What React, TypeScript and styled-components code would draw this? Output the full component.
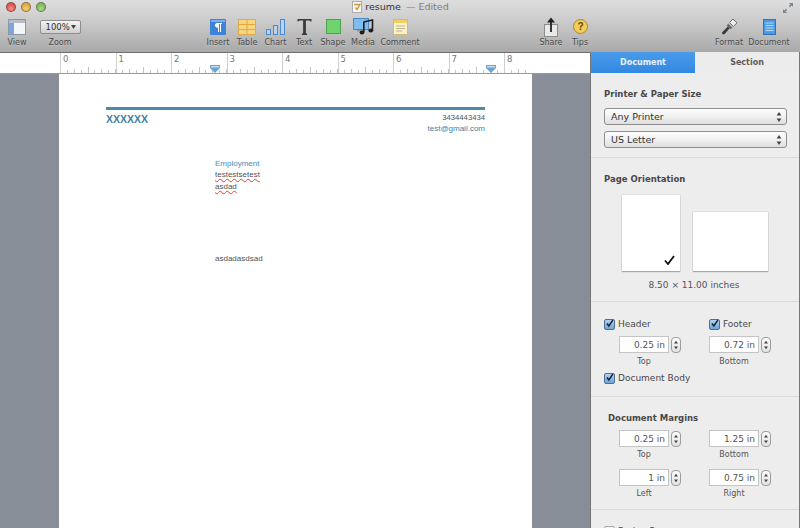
import React from "react";
import styled, { createGlobalStyle } from "styled-components";

const GlobalStyle = createGlobalStyle`
  html, body {
    margin: 0;
    padding: 0;
    height: 100%;
    overflow: hidden;
    background: #ededed;
  }
  * { box-sizing: border-box; }
`;

const Window = styled.div`
  width: 800px;
  height: 528px;
  overflow: hidden;
  display: flex;
  flex-direction: column;
  font-family: "DejaVu Sans", "Open Sans", sans-serif;
  color: #444;
`;

const Chrome = styled.header`
  height: 53px;
  flex: none;
  background: linear-gradient(#dedede, #c9c9c9 45%, #a9a9a9);
  border-bottom: 1px solid #6e6e6e;
`;

const TitleRow = styled.div`
  height: 13px;
  display: grid;
  grid-template-columns: 1fr auto 1fr;
  align-items: center;
`;

const Lights = styled.div`
  display: flex;
  gap: 5px;
  padding-left: 6px;
`;

const Light = styled.span<{ $color: string }>`
  width: 10px;
  height: 10px;
  border-radius: 50%;
  border: 1px solid rgba(70, 70, 70, 0.55);
  background: radial-gradient(circle at 50% 70%, #fff6 0, transparent 60%), ${(p) => p.$color};
`;

const Title = styled.div`
  display: flex;
  align-items: center;
  gap: 3px;
  padding-left: 1px;
  font-size: 9.5px;
  color: #333;
`;

const Edited = styled.span`
  color: #7f7f7f;
  margin-left: 2px;
`;

const Expand = styled.div`
  justify-self: end;
  padding: 3px 7px 0 0;
  display: flex;
`;

const Toolbar = styled.div`
  display: flex;
  padding-top: 3px;
`;

const ToolGroup = styled.div<{ $gap?: number }>`
  display: flex;
  margin-left: ${(p) => p.$gap ?? 0}px;
`;

const Tool = styled.div<{ $w: number }>`
  width: ${(p) => p.$w}px;
  display: flex;
  flex-direction: column;
  align-items: center;
`;

const ToolIconSlot = styled.div`
  height: 21px;
  display: flex;
  align-items: center;
  justify-content: center;
`;

const ToolLabel = styled.div`
  font-size: 8px;
  line-height: 11px;
  color: #4a4a4a;
  white-space: nowrap;
  text-shadow: 0 1px 0 rgba(255, 255, 255, 0.25);
`;

const ZoomSelect = styled.div`
  width: 41px;
  height: 14px;
  display: flex;
  align-items: center;
  justify-content: space-between;
  padding: 0 4px 0 5px;
  font-size: 8.5px;
  color: #333;
  background: linear-gradient(#f4f4f4, #cfcfcf);
  border: 1px solid #8e8e8e;
  border-radius: 2px;
`;

const Workspace = styled.div`
  flex: 1;
  min-height: 0;
  display: flex;
`;

const Editor = styled.main`
  width: 590px;
  flex: none;
  display: flex;
  flex-direction: column;
`;

const Ruler = styled.div`
  position: relative;
  height: 21px;
  flex: none;
  display: flex;
  padding-left: 60px;
  background: #fff;
  border-bottom: 1px solid #9a9a9a;
`;

const Inch = styled.div<{ $w?: number }>`
  width: ${(p) => p.$w ?? 55.5}px;
  flex: none;
  border-left: 1px solid #cfcfcf;
  padding: 1px 0 0 2px;
  display: flex;
  flex-direction: column;
  justify-content: space-between;
  overflow: hidden;
`;

const InchNumber = styled.span`
  font-size: 8.5px;
  line-height: 11px;
  color: #777;
`;

const Ticks = styled.div`
  display: flex;
  align-items: flex-end;
  margin-left: -2px;
`;

const Tick = styled.i<{ $h: number }>`
  display: block;
  width: 6.9px;
  flex: none;
  height: ${(p) => p.$h}px;
  border-right: 1px solid #c6c6c6;
`;

const Marker = styled.svg<{ $x: number }>`
  position: absolute;
  left: ${(p) => p.$x}px;
  bottom: 0;
`;

const Canvas = styled.div`
  flex: 1;
  min-height: 0;
  padding-left: 59px;
  background: #878e98;
`;

const Page = styled.article`
  width: 473px;
  height: 100%;
  background: #fff;
  padding: 33px 47px 0;
`;

const PageRule = styled.div`
  height: 2.5px;
  background: #4d88a8;
`;

const LetterHead = styled.div`
  display: flex;
  justify-content: space-between;
  padding-top: 2px;
`;

const Name = styled.div`
  font-family: "Liberation Sans", Arial, sans-serif;
  font-size: 10.5px;
  line-height: 14px;
  font-weight: 700;
  color: #3f82a6;
`;

const Contact = styled.div`
  font-family: "Liberation Sans", Arial, sans-serif;
  font-size: 7.7px;
  line-height: 11px;
  text-align: right;
  color: #555;
`;

const Mail = styled.div`
  color: #3f82a6;
  font-size: 8px;
`;

const BodyColumn = styled.div`
  margin: 24px 0 0 109px;
  font-family: "Liberation Sans", Arial, sans-serif;
  font-size: 8px;
  line-height: 11.5px;
  color: #555;
`;

const SectionHead = styled.div`
  color: #4a8ab5;
`;

const Misspelt = styled.div`
  height: 12px;
  line-height: 12px;
  text-decoration: underline wavy #e0403c;
  text-decoration-thickness: 1px;
  text-underline-offset: 1px;
`;

const LastLine = styled.div`
  margin-top: 60px;
`;

const Sidebar = styled.aside`
  width: 210px;
  flex: none;
  background: #ededed;
  border-left: 1px solid #777;
  border-right: 1px solid #777;
  margin-top: -1px;
  overflow: hidden;
`;

const Tabs = styled.div`
  height: 21px;
  display: flex;
`;

const Tab = styled.div<{ $active?: boolean }>`
  flex: 1;
  display: flex;
  align-items: center;
  justify-content: center;
  font-size: 8px;
  font-weight: 700;
  color: ${(p) => (p.$active ? "#e8f2fc" : "#5c5c5c")};
  background: ${(p) => (p.$active ? "linear-gradient(#4a9bea, #3288e0)" : "#ececec")};
`;

const Section = styled.section<{ $top?: number; $bottom?: number }>`
  padding: ${(p) => p.$top ?? 15}px 12px ${(p) => p.$bottom ?? 0}px 13px;
  border-bottom: 1px solid #dadada;
`;

const Heading = styled.h3<{ $indent?: number }>`
  margin: 0;
  font-size: 8.5px;
  line-height: 12px;
  font-weight: 700;
  color: #484848;
  padding-left: ${(p) => p.$indent ?? 0}px;
`;

const Select = styled.div<{ $first?: boolean }>`
  height: 17px;
  margin-top: ${(p) => (p.$first ? 8 : 6)}px;
  display: flex;
  align-items: center;
  justify-content: space-between;
  padding: 0 4px 0 6px;
  font-size: 9.5px;
  color: #333;
  background: linear-gradient(#fdfdfd, #f1f1f1 50%, #dedede);
  border: 1px solid #8f8f8f;
  border-radius: 3px;
`;

const Orientation = styled.div`
  display: flex;
  align-items: flex-end;
  gap: 13px;
  margin-top: 10px;
  padding-left: 18px;
`;

const Sheet = styled.div<{ $w: number; $h: number }>`
  width: ${(p) => p.$w}px;
  height: ${(p) => p.$h}px;
  background: #fff;
  box-shadow: 0 0 1px rgba(0, 0, 0, 0.3), 0 1px 1px rgba(0, 0, 0, 0.25);
  display: flex;
  align-items: flex-end;
  justify-content: flex-end;
  padding: 0 5px 6px 0;
`;

const Dimensions = styled.div`
  margin-top: 8px;
  text-align: center;
  font-size: 9px;
  line-height: 12px;
  color: #555;
  padding-right: 3px;
`;

const HeaderGrid = styled.div`
  display: grid;
  grid-template-columns: 105px 1fr;
`;

const CheckRow = styled.label`
  display: flex;
  align-items: center;
  gap: 3px;
  height: 12px;
  font-size: 9px;
  white-space: nowrap;
  color: #484848;
`;

const BodyCheck = styled(CheckRow)`
  margin-top: 5px;
`;

const CheckBox = styled.span<{ $on?: boolean }>`
  width: 11px;
  height: 11px;
  flex: none;
  display: flex;
  align-items: center;
  justify-content: center;
  border-radius: 2px;
  border: 1px solid ${(p) => (p.$on ? "#4c6f95" : "#aaa")};
  background: ${(p) => (p.$on ? "linear-gradient(#b5d2ee, #6fa3d8)" : "#f5f5f5")};
`;

const Field = styled.div<{ $indent?: number }>`
  margin-left: ${(p) => p.$indent ?? 0}px;
  display: flex;
  flex-direction: column;
  width: 62px;
`;

const FieldRow = styled.div`
  display: flex;
  align-items: center;
  gap: 2px;
`;

const Input = styled.div`
  width: 50px;
  height: 17px;
  display: flex;
  align-items: center;
  justify-content: flex-end;
  padding-right: 3px;
  font-size: 9px;
  color: #555;
  background: #fff;
  border: 1px solid #c4c4c4;
`;

const Stepper = styled.div`
  width: 10px;
  height: 16px;
  display: flex;
  align-items: center;
  justify-content: center;
  border: 1px solid #9c9c9c;
  border-radius: 4px;
  background: linear-gradient(#fbfbfb, #e2e2e2);
`;

const Caption = styled.div<{ $gap: number }>`
  width: 50px;
  text-align: center;
  font-size: 8px;
  line-height: 11px;
  color: #555;
  margin-top: ${(p) => p.$gap}px;
`;

const NumberFieldSlot = styled.div`
  margin-top: 6px;
`;

const MarginGrid = styled.div`
  display: grid;
  grid-template-columns: 90px 1fr;
  row-gap: 9px;
  padding: 6px 0 10px 15px;
`;

function SelectArrows() {
  return (
    <svg width="6" height="12" viewBox="0 0 6 12">
      <path d="M3 1 5.4 4.6H.6zM3 11 .6 7.4h4.8z" fill="#444" />
    </svg>
  );
}

function NumberField({ value, label, indent, gap = 2 }: { value: string; label: string; indent?: number; gap?: number }) {
  return (
    <Field $indent={indent}>
      <FieldRow>
        <Input>{value}</Input>
        <Stepper>
          <svg width="6" height="10" viewBox="0 0 6 10">
            <path d="M3 .8 5 3.4H1zM3 9.2 1 6.6h4z" fill="#444" />
          </svg>
        </Stepper>
      </FieldRow>
      <Caption $gap={gap}>{label}</Caption>
    </Field>
  );
}

function Check({ on = true }: { on?: boolean }) {
  return (
    <CheckBox $on={on}>
      {on && (
        <svg width="11" height="11" viewBox="0 0 11 11" style={{ marginTop: -2 }}>
          <path d="M2.4 5.6 4.7 8.6 9.6 1.4" fill="none" stroke="#14243c" strokeWidth="1.9" />
        </svg>
      )}
    </CheckBox>
  );
}

const ViewIcon = () => (
  <svg width="18" height="16" viewBox="0 0 18 16">
    <rect x=".5" y=".5" width="17" height="15" fill="#f4f5f7" stroke="#8a97a8" />
    <rect x="1" y="1" width="16" height="3" fill="#b9bec6" />
    <rect x="1" y="4" width="5" height="11" fill="#7ea6dc" />
  </svg>
);

const InsertIcon = () => (
  <svg width="16" height="16" viewBox="0 0 16 16">
    <rect width="16" height="16" rx="1" fill="#3f83d8" />
    <rect x="1" y="1" width="14" height="2" fill="#7db1ee" />
    <path d="M7 4h5v1h-1v8H10V5H9v8H8V8.6C6 8.6 5 7.4 5 6.2S6 4 7 4z" fill="#fff" />
  </svg>
);

const TableIcon = () => (
  <svg width="18" height="16" viewBox="0 0 18 16">
    <rect x=".5" y=".5" width="17" height="15" fill="#f6d67e" stroke="#d9ae52" />
    <path d="M9 0v16M0 5.5h18M0 10.5h18" stroke="#e0a83e" strokeWidth="1" />
  </svg>
);

const ChartIcon = () => (
  <svg width="19" height="16" viewBox="0 0 19 16">
    <g fill="#b9d2ee" stroke="#4c8bd0">
      <rect x=".5" y="10.5" width="4" height="5" />
      <rect x="7.5" y="6.5" width="4" height="9" />
      <rect x="14.5" y=".5" width="4" height="15" />
    </g>
  </svg>
);

const TextIcon = () => (
  <svg width="15" height="17" viewBox="0 0 15 17">
    <path d="M.5 1h14v2.6h-1C13.2 2.8 12.8 2.4 11.6 2.4H8.9V15l1.2 1v1H4.9v-1l1.2-1V2.4H3.4C2.2 2.4 1.8 2.8 1.5 3.6h-1z" fill="#3b3b3b" />
  </svg>
);

const ShapeIcon = () => (
  <svg width="15" height="15" viewBox="0 0 15 15">
    <rect x=".5" y=".5" width="14" height="14" fill="#6fd36e" stroke="#4aa34a" />
  </svg>
);

const MediaIcon = () => (
  <svg width="21" height="17" viewBox="0 0 21 17">
    <rect x=".5" y=".5" width="15" height="11" fill="#7dbdf0" stroke="#4b87c4" />
    <rect x="4" y="12" width="7" height="1.5" fill="#8a94a0" />
    <path d="M10.5 4 19.5 2v10.5" fill="none" stroke="#1e1e1e" strokeWidth="1.6" />
    <path d="M10.8 4v10" stroke="#1e1e1e" strokeWidth="1.6" />
    <ellipse cx="9" cy="14.5" rx="2.4" ry="1.9" fill="#1e1e1e" />
    <ellipse cx="17.8" cy="12.5" rx="2.4" ry="1.9" fill="#1e1e1e" />
  </svg>
);

const CommentIcon = () => (
  <svg width="15" height="16" viewBox="0 0 15 16">
    <rect x=".5" y=".5" width="14" height="15" fill="#fbf3c6" stroke="#cfbb73" />
    <rect x="1" y="1" width="13" height="3" fill="#f2cf63" />
    <path d="M3 7h9M3 9.5h9M3 12h6" stroke="#b8b294" />
  </svg>
);

const ShareIcon = () => (
  <svg width="14" height="20" viewBox="0 0 14 20">
    <rect x=".5" y="7.5" width="13" height="12" fill="#e9e9e9" stroke="#8c8c8c" />
    <path d="M7 15V2" stroke="#222" strokeWidth="1.8" />
    <path d="M3 5.5 7 .5l4 5z" fill="#222" />
  </svg>
);

const TipsIcon = () => (
  <svg width="15" height="15" viewBox="0 0 15 15">
    <circle cx="7.5" cy="7.5" r="7" fill="#f3cb55" stroke="#a58a3e" />
    <text x="7.5" y="11" textAnchor="middle" fontSize="10" fontWeight="700" fontFamily="Liberation Sans, sans-serif" fill="#5f4c1c">?</text>
  </svg>
);

const FormatIcon = () => (
  <svg width="17" height="17" viewBox="0 0 17 17">
    <path d="M8.5 4.5 12 1l4 3.8-3.6 3.7z" fill="#ececec" stroke="#6f6f6f" />
    <path d="M7.2 5.6 11.4 9.8 9.4 11.2 5.8 7.6z" fill="#6a6a6a" />
    <path d="M6.8 8.4 8.6 10.2 3.8 16c-1.2.8-3 .2-2.8-1.6z" fill="#3c3c3c" />
  </svg>
);

const DocumentIcon = () => (
  <svg width="13" height="16" viewBox="0 0 13 16">
    <rect x=".5" y=".5" width="12" height="15" fill="#4d9ae6" stroke="#2f72bd" />
    <path d="M2.5 4h8M2.5 6.5h8M2.5 9h8M2.5 11.5h8" stroke="#bcdcf8" />
  </svg>
);

const ToolItem = ({ w, label, children }: { w: number; label: string; children: React.ReactNode }) => (
  <Tool $w={w}>
    <ToolIconSlot>{children}</ToolIconSlot>
    <ToolLabel>{label}</ToolLabel>
  </Tool>
);

const inches = ["0", "1", "2", "3", "4", "5", "6", "7", "8"];

const MarkerIcon = ({ x }: { x: number }) => (
  <Marker $x={x} width="10" height="8" viewBox="0 0 10 8">
    <path d="M0 0h10v3L5 8 0 3z" fill="#6fa3cf" />
    <path d="M1 1h8v1.5H1z" fill="#c4dcf0" />
  </Marker>
);

export default function App() {
  return (
    <Window>
      <GlobalStyle />
      <Chrome>
        <TitleRow>
          <Lights>
            <Light $color="#e2544f" />
            <Light $color="#e5ab3a" />
            <Light $color="#7fbb58" />
          </Lights>
          <Title>
            <svg width="10" height="12" viewBox="0 0 10 12">
              <rect x=".5" y=".5" width="9" height="11" fill="#f7f7f7" stroke="#aaa" />
              <path d="M2 3.5h6L5 8.5 3.5 6.5" fill="none" stroke="#c9963c" strokeWidth="1.3" />
            </svg>
            <span>resume</span>
            <Edited>— Edited</Edited>
          </Title>
          <Expand>
            <svg width="10" height="10" viewBox="0 0 10 10">
              <path d="M6 0h4v4L8.6 2.6 7 4.2 5.8 3 7.4 1.4zM0 10V6l1.4 1.4L3 5.8 4.2 7 2.6 8.6 4 10z" fill="#7d8791" />
            </svg>
          </Expand>
        </TitleRow>
        <Toolbar>
          <ToolGroup>
            <ToolItem w={34} label="View"><ViewIcon /></ToolItem>
            <ToolItem w={52} label="Zoom">
              <ZoomSelect>
                100%
                <svg width="5" height="4" viewBox="0 0 5 4"><path d="M0 0h5L2.5 4z" fill="#444" /></svg>
              </ZoomSelect>
            </ToolItem>
          </ToolGroup>
          <ToolGroup $gap={117.5}>
            <ToolItem w={29} label="Insert"><InsertIcon /></ToolItem>
            <ToolItem w={29} label="Table"><TableIcon /></ToolItem>
            <ToolItem w={28} label="Chart"><ChartIcon /></ToolItem>
            <ToolItem w={29} label="Text"><TextIcon /></ToolItem>
            <ToolItem w={29} label="Shape"><ShapeIcon /></ToolItem>
            <ToolItem w={31} label="Media"><MediaIcon /></ToolItem>
            <ToolItem w={43} label="Comment"><CommentIcon /></ToolItem>
          </ToolGroup>
          <ToolGroup $gap={115.5}>
            <ToolItem w={28} label="Share"><ShareIcon /></ToolItem>
            <ToolItem w={30} label="Tips"><TipsIcon /></ToolItem>
          </ToolGroup>
          <ToolGroup $gap={114}>
            <ToolItem w={40} label="Format"><FormatIcon /></ToolItem>
            <ToolItem w={40} label="Document"><DocumentIcon /></ToolItem>
          </ToolGroup>
        </Toolbar>
      </Chrome>
      <Workspace>
        <Editor>
          <Ruler>
            {inches.map((n, i) => (
              <Inch key={n} $w={i === 8 ? 28 : undefined}>
                <InchNumber>{n}</InchNumber>
                <Ticks>
                  {Array.from({ length: i === 8 ? 4 : 8 }, (_, t) => (
                    <Tick key={t} $h={t === 3 ? 6 : t % 2 === 1 ? 4 : 3} />
                  ))}
                </Ticks>
              </Inch>
            ))}
            <MarkerIcon x={210} />
            <MarkerIcon x={486} />
          </Ruler>
          <Canvas>
            <Page>
              <PageRule />
              <LetterHead>
                <Name>XXXXXX</Name>
                <Contact>
                  3434443434
                  <Mail>test@gmail.com</Mail>
                </Contact>
              </LetterHead>
              <BodyColumn>
                <SectionHead>Employment</SectionHead>
                <Misspelt>testestsetest</Misspelt>
                <Misspelt>asdad</Misspelt>
                <LastLine>asdadasdsad</LastLine>
              </BodyColumn>
            </Page>
          </Canvas>
        </Editor>
        <Sidebar>
          <Tabs>
            <Tab $active>Document</Tab>
            <Tab>Section</Tab>
          </Tabs>
          <Section $bottom={9}>
            <Heading>Printer &amp; Paper Size</Heading>
            <Select $first>Any Printer<SelectArrows /></Select>
            <Select>US Letter<SelectArrows /></Select>
          </Section>
          <Section $bottom={10}>
            <Heading>Page Orientation</Heading>
            <Orientation>
              <Sheet $w={58} $h={76}>
                <svg width="11" height="10" viewBox="0 0 11 10">
                  <path d="M1 5.5 4 9 10 1" fill="none" stroke="#111" strokeWidth="1.8" />
                </svg>
              </Sheet>
              <Sheet $w={75} $h={59} />
            </Orientation>
            <Dimensions>8.50 × 11.00 inches</Dimensions>
          </Section>
          <Section $top={16} $bottom={12}>
            <HeaderGrid>
              <CheckRow><Check />Header</CheckRow>
              <CheckRow><Check />Footer</CheckRow>
              <NumberFieldSlot><NumberField value="0.25 in" label="Top" indent={15} gap={3} /></NumberFieldSlot>
              <NumberFieldSlot><NumberField value="0.72 in" label="Bottom" gap={3} /></NumberFieldSlot>
            </HeaderGrid>
            <BodyCheck><Check />Document Body</BodyCheck>
          </Section>
          <Section>
            <Heading $indent={4}>Document Margins</Heading>
            <MarginGrid>
              <NumberField value="0.25 in" label="Top" />
              <NumberField value="1.25 in" label="Bottom" />
              <NumberField value="1 in" label="Left" />
              <NumberField value="0.75 in" label="Right" />
            </MarginGrid>
          </Section>
          <Section>
            <CheckRow><Check on={false} />Facing Pages</CheckRow>
          </Section>
        </Sidebar>
      </Workspace>
    </Window>
  );
}
